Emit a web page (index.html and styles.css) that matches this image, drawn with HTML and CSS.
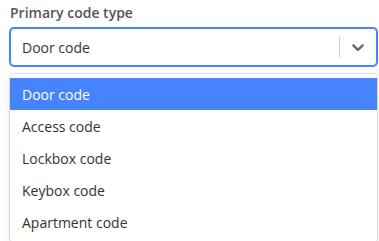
FILE: index.html
```html
<!DOCTYPE html>
<html>
<head>
<meta charset="utf-8">
<link rel="stylesheet" href="styles.css">
</head>
<body>
<div class="field">
  <label class="label">Primary code type</label>
  <div class="select">
    <div class="control">
      <div class="value">Door code</div>
      <div class="indicators">
        <span class="sep"></span>
        <span class="chev">
          <svg width="20" height="20" viewBox="0 0 20 20"><path fill="#666" d="M4.516 7.548c0.436-0.446 1.043-0.481 1.576 0l3.908 3.747 3.908-3.747c0.533-0.481 1.141-0.446 1.574 0 0.436 0.445 0.408 1.197 0 1.615-0.406 0.418-4.695 4.502-4.695 4.502-0.217 0.223-0.502 0.335-0.787 0.335s-0.57-0.112-0.789-0.335c0 0-4.287-4.084-4.695-4.502s-0.436-1.17 0-1.615z"/></svg>
        </span>
      </div>
    </div>
    <div class="menu">
      <div class="option active">Door code</div>
      <div class="option">Access code</div>
      <div class="option">Lockbox code</div>
      <div class="option">Keybox code</div>
      <div class="option">Apartment code</div>
    </div>
  </div>
</div>
</body>
</html>
```
FILE: styles.css
```css
html, body { margin: 0; padding: 0; background: #fff; }
body {
  font-family: "Open Sans", "Noto Sans", sans-serif;
  padding: 3px 2px 0 10px;
  height: 241px;
  overflow: hidden;
  box-sizing: border-box;
}
.field { display: flex; flex-direction: column; }
.label {
  font-size: 14px;
  font-weight: 600;
  color: #555;
  line-height: 20px;
  margin-bottom: 5px;
}
.select { display: flex; flex-direction: column; }
.control {
  height: 38px;
  box-sizing: border-box;
  border: 1px solid #4684fe;
  box-shadow: 0 0 0 1px #4684fe;
  border-radius: 4px;
  display: flex;
  align-items: stretch;
  background: #fff;
}
.value {
  flex: 1;
  display: flex;
  align-items: center;
  padding: 2px 11px;
  font-size: 14px;
  color: #333;
}
.indicators { display: flex; align-items: stretch; }
.sep {
  width: 1px;
  background: #ccc;
  margin: 8px 0;
}
.chev {
  display: flex;
  align-items: center;
  padding: 8px;
}
.chev svg { display: block; }
.menu {
  margin-top: 8px;
  border-radius: 4px;
  box-shadow: 0 0 0 1px rgba(0,0,0,0.1), 0 4px 11px rgba(0,0,0,0.1);
  padding: 4px 0;
  background: #fff;
}
.option {
  padding: 0 12px;
  height: 32px;
  display: flex;
  align-items: center;
  font-size: 14px;
  color: #333;
}
.option.active { background: #4684fe; color: #fff; }
```
